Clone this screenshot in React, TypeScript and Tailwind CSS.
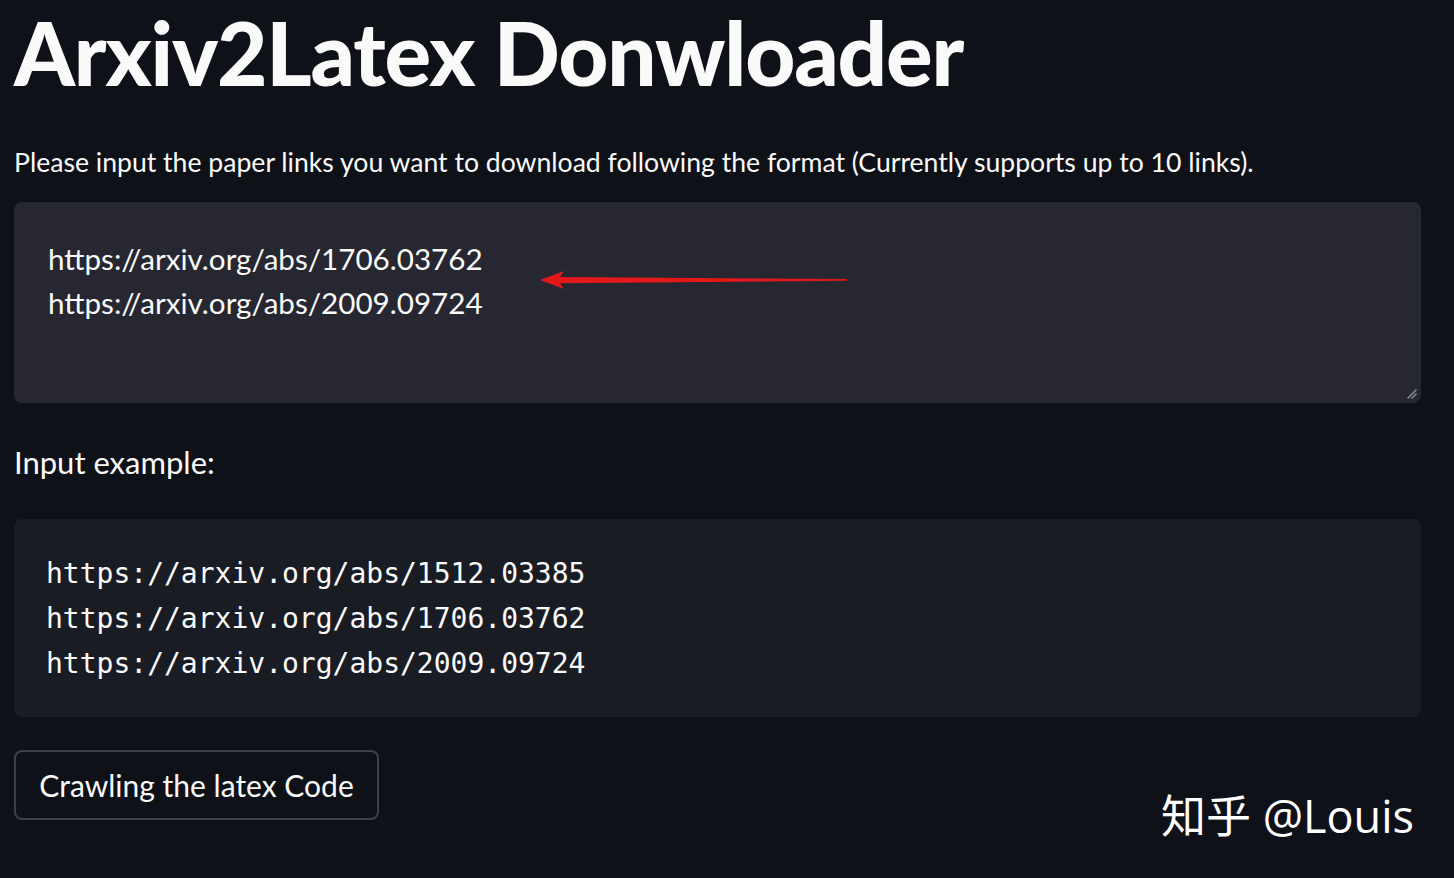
import React from 'react';

const inputLinks = ['https://arxiv.org/abs/1706.03762', 'https://arxiv.org/abs/2009.09724'];

const exampleLinks = [
  'https://arxiv.org/abs/1512.03385',
  'https://arxiv.org/abs/1706.03762',
  'https://arxiv.org/abs/2009.09724',
];

const sans = "font-['Lato','Noto_Sans',sans-serif]";

const App: React.FC = () => {
  return (
    <div className={`min-h-[878px] w-full bg-[#0e1117] text-[#fafafa] ${sans} overflow-hidden`}>
      <div className="pl-[14px] pr-[33px]">
        {/* Titre */}
        <h1 className="text-[87px] font-black leading-[105px] tracking-[-1.2px]">Arxiv2Latex Donwloader</h1>

        <p className="mt-[40px] text-[26.6px] leading-[34px]">
          Please input the paper links you want to download following the format (Currently supports up to 10 links).
        </p>

        {/* Zone de saisie */}
        <div className="relative mt-[23px] h-[201px] rounded-lg bg-[#262730] pl-[34px] pt-[35px]">
          {inputLinks.map((l) => (
            <div key={l} className="text-[29.6px] leading-[44px]">{l}</div>
          ))}
          <svg className="absolute left-[524px] top-[68px]" width="330" height="20" viewBox="0 0 330 20">
            <polygon points="2,10 26,1 22,7 309,9 309,10.8 22,13.2 26,19" fill="#e3181b" />
          </svg>
          <svg className="absolute bottom-[3px] right-[3px]" width="12" height="12" viewBox="0 0 12 12">
            <path d="M2 10 L10 2 M6 10 L10 6" stroke="#8a8c94" strokeWidth="1.6" strokeLinecap="round" />
          </svg>
        </div>

        <p className="mt-[40px] text-[31px] leading-[38px]">Input example:</p>

        {/* Bloc de code */}
        <div className="mt-[38px] h-[198px] rounded-lg bg-[#1a1c24] pl-[32px] pt-[32px]">
          {exampleLinks.map((l) => (
            <div key={l} className="font-['DejaVu_Sans_Mono','Liberation_Mono',monospace] text-[28px] leading-[45px]">{l}</div>
          ))}
        </div>

        {/* Bouton + filigrane */}
        <div className="mt-[33px] flex items-start justify-between">
          <button className="h-[70px] w-[365px] rounded-lg border-2 border-[#3d4048] bg-transparent text-[30px] text-[#fafafa]">
            Crawling the latex Code
          </button>
          <div className="mt-[41px] mr-[7px] font-['Open_Sans','Noto_Sans_CJK_SC',sans-serif] text-[45px] leading-[50px] text-white">
            知乎 @Louis
          </div>
        </div>
      </div>
    </div>
  );
};

export default App;
